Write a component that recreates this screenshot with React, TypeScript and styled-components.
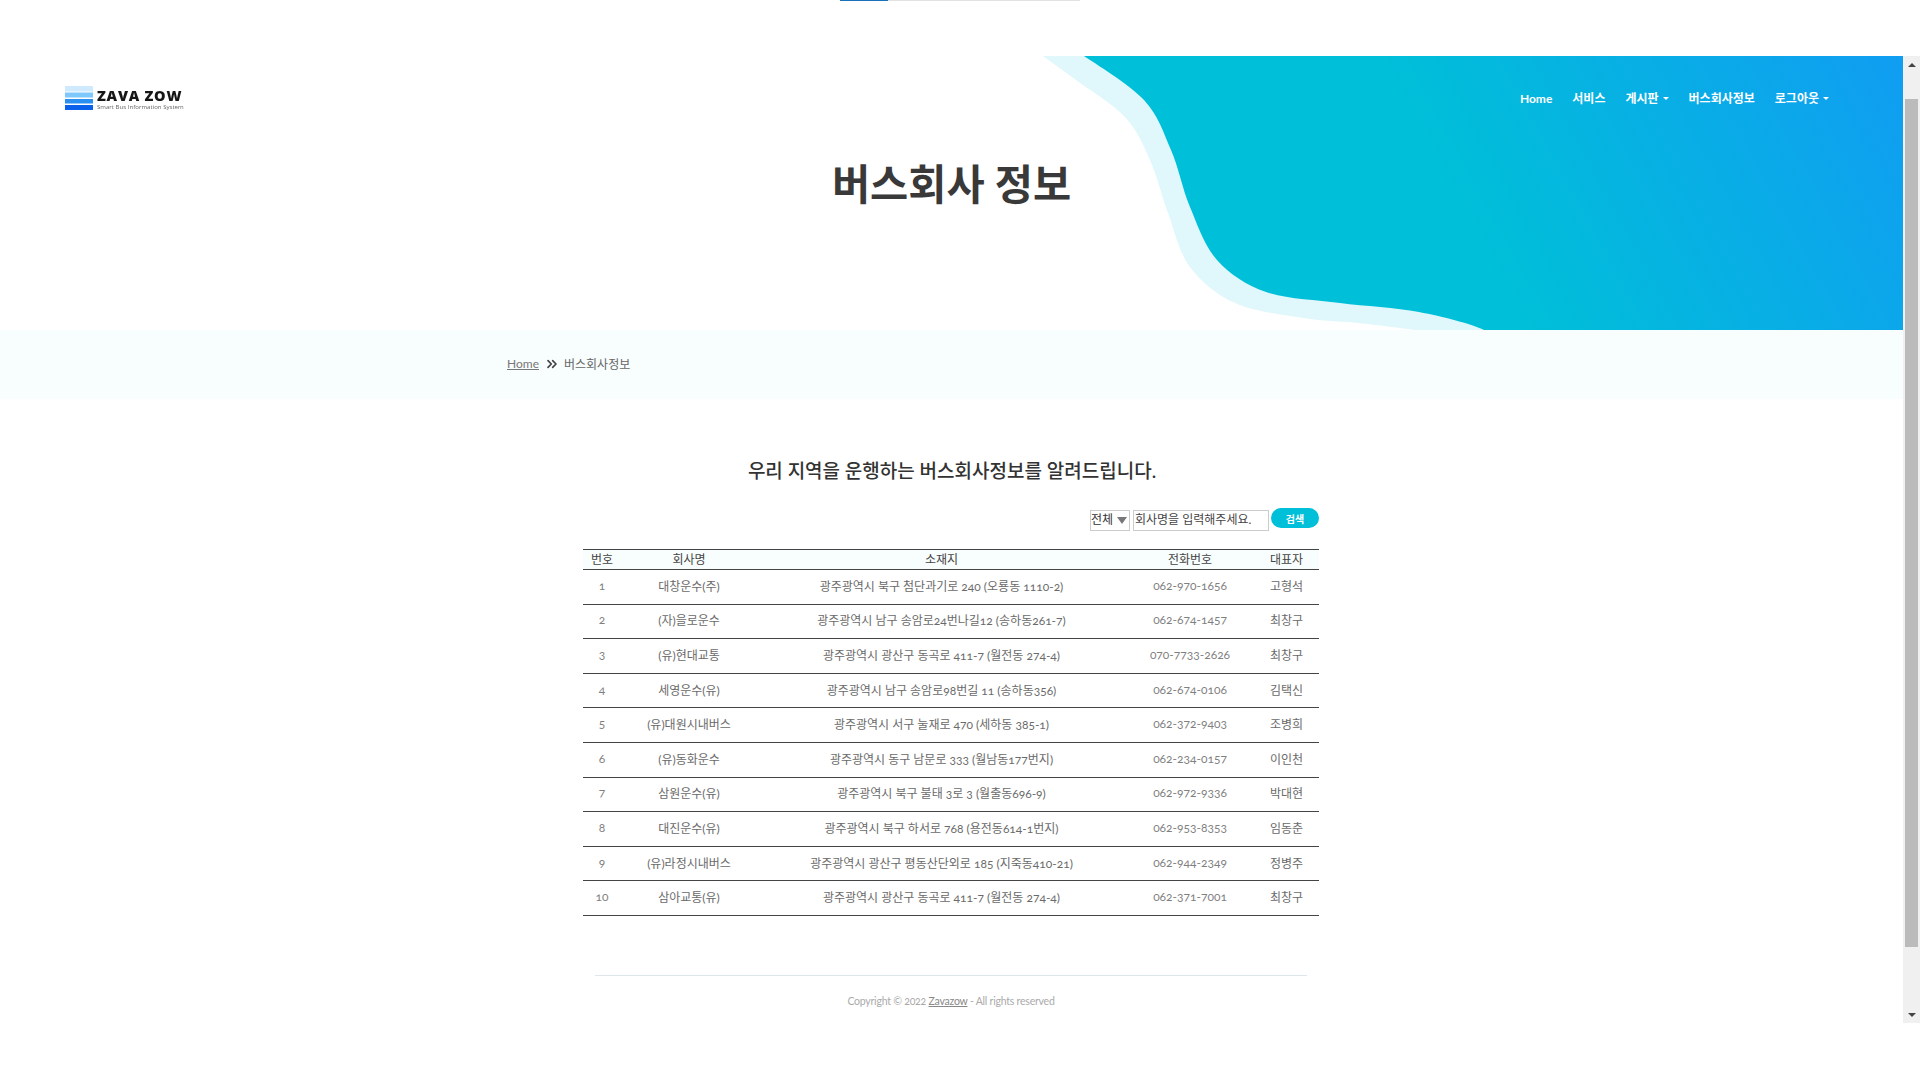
import React from 'react';
import styled, { createGlobalStyle } from 'styled-components';
import { ChevronsRight } from 'lucide-react';

const fontStack = `"Lato", "Noto Sans CJK KR", "Noto Sans", sans-serif`;

const GlobalStyle = createGlobalStyle`
    html, body {
        margin: 0;
        padding: 0;
        height: 100%;
        overflow: hidden;
        background: #fff;
    }
    body {
        font-family: ${fontStack};
        font-variant-numeric: oldstyle-nums;
        font-feature-settings: "onum" 1;
    }
`;

const LoadBarRow = styled.div`
    display: flex;
    justify-content: center;
    height: 56px;
`;

const LoadBarTrack = styled.div`
    width: 240px;
    height: 1px;
    background: #e2e2e2;
`;

const LoadBarFill = styled.div`
    width: 20%;
    height: 100%;
    background: #1a70b8;
`;

const Frame = styled.div`
    display: flex;
    height: 967px;
`;

const PageContent = styled.div`
    flex: 1;
    min-width: 0;
    overflow: hidden;
`;

const Scrollbar = styled.div`
    width: 17px;
    display: flex;
    flex-direction: column;
    align-items: center;
    background: #f0f0f0;
`;

const ScrollArrow = styled.div<{ $down?: boolean }>`
    height: 17px;
    width: 100%;
    flex: none;
    display: flex;
    align-items: center;
    justify-content: center;
    margin-top: ${({ $down }) => ($down ? 'auto' : '0')};

    &:after {
        content: "";
        border-left: 4px solid transparent;
        border-right: 4px solid transparent;
        ${({ $down }) => ($down ? 'border-top: 4px solid #444;' : 'border-bottom: 4px solid #444;')}
    }
`;

const ScrollThumb = styled.div`
    width: 13px;
    height: 848px;
    margin-top: 26px;
    background: #bbbbbb;
`;

const Hero = styled.header`
    position: relative;
    height: 274px;
`;

const HeroShape = styled.svg`
    position: absolute;
    inset: 0;
    width: 100%;
    height: 100%;
`;

const NavBar = styled.div`
    position: relative;
    display: flex;
    align-items: center;
    justify-content: space-between;
    padding: 30px 74px 0 65px;
`;

const Logo = styled.div`
    display: flex;
    align-items: center;
    gap: 4px;
    filter: blur(0.35px);
`;

const LogoText = styled.div`
    display: flex;
    flex-direction: column;
    padding-top: 3px;
`;

const LogoName = styled.span`
    font-family: "Open Sans", sans-serif;
    font-size: 14.5px;
    line-height: 14px;
    font-weight: 800;
    letter-spacing: 0.75px;
    color: #161616;
`;

const LogoTagline = styled.span`
    font-family: "Open Sans", sans-serif;
    font-size: 6.1px;
    line-height: 8px;
    color: #666;
    white-space: nowrap;
`;

const NavList = styled.nav`
    display: flex;
    align-items: center;
    gap: 20px;
`;

const NavItem = styled.a<{ $caret?: boolean }>`
    display: flex;
    align-items: center;
    font-size: 12px;
    font-weight: 700;
    color: #fff;
    line-height: 20px;
    white-space: nowrap;

    ${({ $caret }) => $caret && `
        &:after {
            content: "";
            margin-left: 4px;
            border-left: 3px solid transparent;
            border-right: 3px solid transparent;
            border-top: 3px solid #fff;
        }
    `}
`;

const HeroTitle = styled.h1`
    position: relative;
    margin: 48px 0 0;
    text-align: center;
    font-size: 41.5px;
    line-height: 50px;
    font-weight: 700;
    color: #393939;
`;

const BreadcrumbBand = styled.div`
    height: 67px;
    padding: 0 0 2px 507px;
    display: flex;
    align-items: center;
    gap: 4px;
    background: #f8fdfd;
    font-size: 12px;
    color: #666;
`;

const BreadcrumbLink = styled.a`
    color: #777;
    text-decoration: underline;
`;

const BreadcrumbArrow = styled(ChevronsRight)`
    color: #444;
    margin-left: 1px;
`;

const Main = styled.main`
    display: flex;
    flex-direction: column;
    align-items: center;
    padding-right: 1px;
`;

const Lead = styled.h2`
    margin: 59px 0 0 2px;
    font-size: 19px;
    line-height: 26px;
    font-weight: 500;
    color: #333;
`;

const SearchRow = styled.form`
    width: 736px;
    height: 23px;
    margin-top: 24px;
    display: flex;
    justify-content: flex-end;
    align-items: flex-start;
`;

const SelectBox = styled.div`
    position: relative;
    margin-top: 2px;

    &:after {
        content: "";
        position: absolute;
        right: 3px;
        top: 7px;
        border-left: 5px solid transparent;
        border-right: 5px solid transparent;
        border-top: 7px solid #777;
        pointer-events: none;
    }
`;

const Select = styled.select`
    display: block;
    appearance: none;
    box-sizing: border-box;
    width: 40px;
    height: 21px;
    padding: 0 0 2px 0;
    border: 1px solid #ccc;
    border-radius: 0;
    background: #fff;
    font-family: ${fontStack};
    font-size: 12px;
    color: #333;
`;

const SearchInput = styled.input`
    box-sizing: border-box;
    width: 136px;
    height: 21px;
    margin: 2px 2px 0 3px;
    padding: 0 2px 2px 1px;
    border: 1px solid #ccc;
    font-family: ${fontStack};
    font-size: 12px;
    color: #333;

    &::placeholder {
        color: #444;
        opacity: 1;
    }
`;

const SearchButton = styled.button`
    width: 48px;
    height: 20px;
    padding: 1px 0 0;
    border: 0;
    border-radius: 10px;
    background: #00bfd8;
    color: #fff;
    font-family: ${fontStack};
    font-size: 10px;
    font-weight: 700;
`;

const Table = styled.table`
    width: 736px;
    margin-top: 18px;
    table-layout: fixed;
    border-collapse: collapse;
    border-top: 1px solid #444;
    font-size: 12px;
    color: #777;
    text-align: center;
`;

const HeadRow = styled.tr`
    height: 20px;
    background: #f8fdfd;
    border-bottom: 1px solid #444;
`;

const HeadCell = styled.th`
    padding: 0 0 2px;
    font-weight: 400;
    color: #444;
`;

const Row = styled.tr`
    height: 34.6px;
    border-bottom: 1px solid #444;
`;

const Cell = styled.td<{ $dark?: boolean }>`
    padding: 0 0 3px;
    color: ${({ $dark }) => ($dark ? '#6a6a6a' : '#808080')};
    white-space: nowrap;
`;

const FooterRule = styled.hr`
    width: 712px;
    height: 1px;
    margin: 59px 0 0;
    border: 0;
    background: #dde6ea;
`;

const Copyright = styled.p`
    margin: 17px 0 0;
    font-size: 10.5px;
    letter-spacing: -0.22px;
    line-height: 16px;
    color: #aaa;
`;

const CopyrightLink = styled.a`
    color: #888;
    text-decoration: underline;
`;

interface ICompany {
    name: string;
    address: string;
    phone: string;
    ceo: string;
}

const companies: ICompany[] = [
    { name: '대창운수(주)', address: '광주광역시 북구 첨단과기로 240 (오룡동 1110-2)', phone: '062-970-1656', ceo: '고형석' },
    { name: '(자)을로운수', address: '광주광역시 남구 송암로24번나길12 (송하동261-7)', phone: '062-674-1457', ceo: '최창구' },
    { name: '(유)현대교통', address: '광주광역시 광산구 동곡로 411-7 (월전동 274-4)', phone: '070-7733-2626', ceo: '최창구' },
    { name: '세영운수(유)', address: '광주광역시 남구 송암로98번길 11 (송하동356)', phone: '062-674-0106', ceo: '김택신' },
    { name: '(유)대원시내버스', address: '광주광역시 서구 눌재로 470 (세하동 385-1)', phone: '062-372-9403', ceo: '조병희' },
    { name: '(유)동화운수', address: '광주광역시 동구 남문로 333 (월남동177번지)', phone: '062-234-0157', ceo: '이인천' },
    { name: '삼원운수(유)', address: '광주광역시 북구 불태 3로 3 (월출동696-9)', phone: '062-972-9336', ceo: '박대현' },
    { name: '대진운수(유)', address: '광주광역시 북구 하서로 768 (용전동614-1번지)', phone: '062-953-8353', ceo: '임동춘' },
    { name: '(유)라정시내버스', address: '광주광역시 광산구 평동산단외로 185 (지죽동410-21)', phone: '062-944-2349', ceo: '정병주' },
    { name: '삼아교통(유)', address: '광주광역시 광산구 동곡로 411-7 (월전동 274-4)', phone: '062-371-7001', ceo: '최창구' },
];

const columnWidths = [38, 136, 369, 128, 65];

const LogoMark = () => (
    <svg width="28" height="25" viewBox="0 0 28 25">
        <rect x="0" y="0" width="28" height="5.5" fill="#cfeaff" />
        <rect x="0" y="6.5" width="28" height="5" fill="#7fc8fb" />
        <rect x="0" y="13" width="28" height="4.5" fill="#2a8ff0" />
        <rect x="0" y="19" width="28" height="5" fill="#0a60ea" />
    </svg>
);

const HeroBackground = () => (
    <HeroShape viewBox="0 0 1903 274" preserveAspectRatio="none">
        <defs>
            <linearGradient id="heroGradient" gradientUnits="userSpaceOnUse" x1="1500" y1="220" x2="1903" y2="0">
                <stop offset="0" stopColor="#00bfd8" />
                <stop offset="1" stopColor="#109df2" />
            </linearGradient>
        </defs>
        <path
            d="M1043 0 C1048.5 4 1062.3 13.8 1076 24 C1089.7 34.2 1112.7 47.7 1125 61 C1137.3 74.3 1142.8 88 1150 104 C1157.2 120 1161.3 139.2 1168 157 C1174.7 174.8 1178.8 196 1190 211 C1201.2 226 1216.2 238.5 1235 247 C1253.8 255.5 1282.5 258.7 1303 262 C1323.5 265.3 1339.2 265 1358 267 C1376.8 269 1406 272.8 1416 274 L1903 274 L1903 0 Z"
            fill="#e0f7fb"
        />
        <path
            d="M1084 0 C1094 7 1129.5 28.3 1144 44 C1158.5 59.7 1163.3 76.2 1171 94 C1178.7 111.8 1182.3 132.7 1190 151 C1197.7 169.3 1204.3 189.8 1217 204 C1229.7 218.2 1245.5 228.8 1266 236 C1286.5 243.2 1314.5 243.7 1340 247 C1365.5 250.3 1395.5 251.5 1419 256 C1442.5 260.5 1472 268 1484 274 L1903 274 L1903 0 Z"
            fill="url(#heroGradient)"
        />
    </HeroShape>
);

const App = () => (
    <>
        <GlobalStyle />
        <LoadBarRow>
            <LoadBarTrack>
                <LoadBarFill />
            </LoadBarTrack>
        </LoadBarRow>
        <Frame>
            <PageContent>
                <Hero>
                    <HeroBackground />
                    <NavBar>
                        <Logo>
                            <LogoMark />
                            <LogoText>
                                <LogoName>ZAVA ZOW</LogoName>
                                <LogoTagline>Smart Bus Information System</LogoTagline>
                            </LogoText>
                        </Logo>
                        <NavList>
                            <NavItem>Home</NavItem>
                            <NavItem>서비스</NavItem>
                            <NavItem $caret>게시판</NavItem>
                            <NavItem>버스회사정보</NavItem>
                            <NavItem $caret>로그아웃</NavItem>
                        </NavList>
                    </NavBar>
                    <HeroTitle>버스회사 정보</HeroTitle>
                </Hero>
                <BreadcrumbBand>
                    <BreadcrumbLink>Home</BreadcrumbLink>
                    <BreadcrumbArrow size={16} strokeWidth={2.5} />
                    <span>버스회사정보</span>
                </BreadcrumbBand>
                <Main>
                    <Lead>우리 지역을 운행하는 버스회사정보를 알려드립니다.</Lead>
                    <SearchRow>
                        <SelectBox>
                            <Select defaultValue="all">
                                <option value="all">전체</option>
                            </Select>
                        </SelectBox>
                        <SearchInput placeholder="회사명을 입력해주세요." />
                        <SearchButton type="button">검색</SearchButton>
                    </SearchRow>
                    <Table>
                        <colgroup>
                            {columnWidths.map((w) => <col key={w} width={w} />)}
                        </colgroup>
                        <thead>
                            <HeadRow>
                                <HeadCell>번호</HeadCell>
                                <HeadCell>회사명</HeadCell>
                                <HeadCell>소재지</HeadCell>
                                <HeadCell>전화번호</HeadCell>
                                <HeadCell>대표자</HeadCell>
                            </HeadRow>
                        </thead>
                        <tbody>
                            {companies.map((c, i) => (
                                <Row key={c.name}>
                                    <Cell>{i + 1}</Cell>
                                    <Cell $dark>{c.name}</Cell>
                                    <Cell $dark>{c.address}</Cell>
                                    <Cell>{c.phone}</Cell>
                                    <Cell $dark>{c.ceo}</Cell>
                                </Row>
                            ))}
                        </tbody>
                    </Table>
                    <FooterRule />
                    <Copyright>
                        Copyright © 2022 <CopyrightLink>Zavazow</CopyrightLink> - All rights reserved
                    </Copyright>
                </Main>
            </PageContent>
            <Scrollbar>
                <ScrollArrow />
                <ScrollThumb />
                <ScrollArrow $down />
            </Scrollbar>
        </Frame>
    </>
);

export default App;
